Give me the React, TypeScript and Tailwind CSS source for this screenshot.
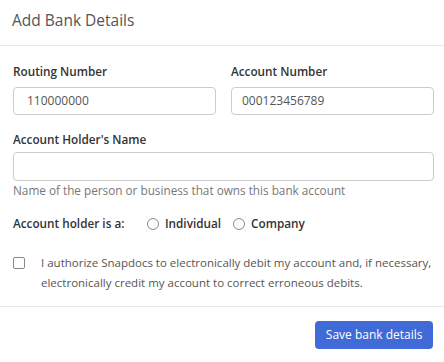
import React from "react";

export default function App() {
  const font = { fontFamily: '"Open Sans", "Noto Sans", sans-serif' };
  return (
    <div className="w-[444px] h-[362px] bg-white" style={font}>
      <div className="pl-[12px] pt-[8px] pb-[13px] border-b border-[#e6e6e6]">
        <div className="text-[15.5px] leading-[24px] text-[#555555]">Add Bank Details</div>
      </div>
      <div className="pl-[13px] pr-[10px] pt-[16px]">
        <div className="flex gap-[15px]">
          <div className="flex-1">
            <div className="text-[11.75px] leading-[18px] font-semibold text-[#333333]">Routing Number</div>
            <div className="mt-[7px] h-[28px] border border-[#cccccc] rounded-[4px] flex items-center px-[13px] text-[12px] text-[#555555]">110000000</div>
          </div>
          <div className="flex-1">
            <div className="text-[11.75px] leading-[18px] font-semibold text-[#333333]">Account Number</div>
            <div className="mt-[7px] h-[28px] border border-[#cccccc] rounded-[4px] flex items-center px-[10px] text-[12px] text-[#555555]">000123456789</div>
          </div>
        </div>
        <div className="mt-[15px] text-[11.75px] leading-[18px] font-semibold text-[#333333]">Account Holder's Name</div>
        <div className="mt-[4px] h-[29px] border border-[#cccccc] rounded-[4px]"></div>
        <div className="mt-[1px] text-[11.75px] leading-[16px] text-[#777777]">Name of the person or business that owns this bank account</div>
        <div className="mt-[16px] flex items-center h-[20px] text-[11.75px] font-semibold text-[#333333]">
          <span className="w-[112px] whitespace-nowrap">Account holder is a:</span>
          <span className="ml-[22px] w-[12px] h-[12px] rounded-full border border-[#888888]"></span>
          <span className="ml-[6px]">Individual</span>
          <span className="ml-[12px] w-[12px] h-[12px] rounded-full border border-[#888888]"></span>
          <span className="ml-[6px]">Company</span>
        </div>
        <div className="mt-[19px] flex">
          <span className="mt-[4px] w-[12px] h-[12px] rounded-[2px] border border-[#888888] shrink-0"></span>
          <div className="ml-[16px] text-[11.5px] leading-[20px] text-[#555555]">
            I authorize Snapdocs to electronically debit my account and, if necessary, electronically credit my account to correct erroneous debits.
          </div>
        </div>
      </div>
      <div className="mt-[13px] border-t border-[#e6e6e6] flex justify-end pr-[11px] pt-[14px]">
        <div className="h-[28px] px-[10.5px] rounded-[4px] bg-[#3f6ad8] text-white text-[12px] flex items-center">Save bank details</div>
      </div>
    </div>
  );
}
